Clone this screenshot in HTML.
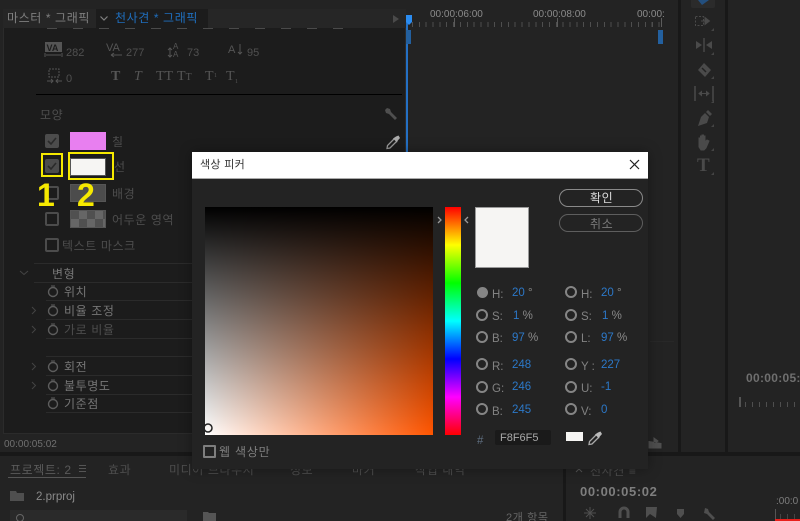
<!DOCTYPE html>
<html lang="ko"><head><meta charset="utf-8">
<style>
html,body{margin:0;padding:0;background:#232323}
#p{position:relative;width:800px;height:521px;overflow:hidden;background:#232323;font-family:"Liberation Sans","Noto Sans CJK KR",sans-serif;font-size:11px;color:#777}
#p div,#p span,#p svg{position:absolute}
.t{white-space:nowrap;line-height:14px;letter-spacing:.6px;font-size:12px;margin-top:1px}
.d{color:#4d4d4d}.m{color:#767676}.l{color:#8a8a8a}
.tc{color:#8b8b8b;font-size:10px;letter-spacing:0;white-space:nowrap;line-height:12px}
.n{color:#505050;font-size:11px;white-space:nowrap;line-height:12px}
.ck{width:10px;height:10px;border:2px solid #4c4c4c;border-radius:2px}
.on{background:#4c4c4c}
.sep{height:1px;background:#2b2b2b}
.r{width:8px;height:8px;border:2px solid #858585;border-radius:50%}
.lb{color:#828282;font-size:11.5px;line-height:13px;white-space:nowrap;margin-top:1px}
.v{color:#2c78c8;font-size:11.5px;line-height:13px;white-space:nowrap;margin-top:1px}
.v i{font-style:normal;color:#8a8a8a}
.sf{font-family:"Liberation Serif",serif;font-size:14px;line-height:16px;color:#555;white-space:nowrap}
.c{width:0;height:0;border-left:3px solid transparent;border-bottom:3px solid #444}
</style></head><body>
<div id="p">
<!-- left panel -->
<div style="left:3px;top:9px;width:403px;height:425px;background:#1c1c1c;border:1px solid #2b2b2b;box-sizing:border-box"></div>
<div style="left:3px;top:9px;width:403px;height:19px;background:#262626"></div>
<div style="left:96px;top:9px;width:112px;height:19px;background:#1c1c1c"></div>
<span class="t" style="left:7px;top:10px;color:#7f7f7f">마스터 * 그래픽</span>
<svg style="left:99px;top:15px" width="10" height="7"><path d="M1.500 1.500L5 5L8.500 1.500" fill="none" stroke="#808080" stroke-width="1.200"/></svg>
<span class="t" style="left:115px;top:10px;color:#1f6fbf">천사견 * 그래픽</span>
<svg style="left:392px;top:14px" width="8" height="10"><path d="M1 1L7 5L1 9Z" fill="#4a4a4a"/></svg>
<div style="left:47px;top:28px;width:310px;height:1px;background:repeating-linear-gradient(90deg,#4a4a4a 0 10px,transparent 10px 26px)"></div>
<!-- text attributes -->
<svg style="left:44px;top:41px" width="19" height="17"><rect x="1" y="1" width="17" height="10" fill="#555"/><text x="2.500" y="10" font-size="9" font-weight="bold" fill="#1c1c1c" font-family="Liberation Sans">VA</text><path d="M1 12v4M18 12v4M2 14h15" stroke="#555"/></svg>
<span class="n" style="left:66px;top:47px">282</span>
<svg style="left:106px;top:41px" width="17" height="17"><text x="0" y="10" font-size="11" fill="#555" font-family="Liberation Sans">VA</text><path d="M5 14h11M5 14l3-2M5 14l3 2" stroke="#555" fill="none"/></svg>
<span class="n" style="left:126px;top:47px">277</span>
<svg style="left:167px;top:40px" width="16" height="18"><text x="6" y="9" font-size="8" fill="#555" font-family="Liberation Sans">A</text><text x="6" y="17" font-size="8" fill="#555" font-family="Liberation Sans">A</text><path d="M3 8v9M1 10l2-2l2 2M1 15l2 2l2-2" stroke="#555" fill="none"/></svg>
<span class="n" style="left:187px;top:47px">73</span>
<svg style="left:227px;top:41px" width="16" height="16"><text x="1" y="12" font-size="11" fill="#555" font-family="Liberation Sans">A</text><path d="M13 3v10M11 11l2 2l2-2" stroke="#555" fill="none"/></svg>
<span class="n" style="left:247px;top:47px">95</span>
<svg style="left:46px;top:68px" width="17" height="16"><rect x="3" y="1" width="10" height="8" fill="none" stroke="#555" stroke-dasharray="2 1"/><path d="M1 13h6M5 11l2 2l-2 2M16 13h-6M12 11l-2 2l2 2" stroke="#555" fill="none"/></svg>
<span class="n" style="left:66px;top:73px">0</span>
<div class="sf" style="left:111px;top:69px;font-weight:bold">T</div>
<div class="sf" style="left:134px;top:69px;font-style:italic">T</div>
<div class="sf" style="left:156px;top:69px">TT</div>
<div class="sf" style="left:177px;top:69px">T<span style="position:static;font-size:10px">T</span></div>
<div class="sf" style="left:205px;top:69px">T<span style="left:9px;top:-1px;font-size:6px">1</span></div>
<div class="sf" style="left:226px;top:69px">T<span style="left:9px;top:5px;font-size:6px">1</span></div>
<div style="left:36px;top:94px;width:366px;height:1px;background:#000"></div>
<span class="t d" style="left:40px;top:107px">모양</span>
<svg style="left:383px;top:107px" width="15" height="15"><path d="M2 3l2-2l3 1l1 3l6 6l-2 2l-6-6l-3-1z" fill="#4f4f4f"/></svg>
<svg style="left:385px;top:134px" width="16" height="16"><path d="M9 5L2.500 11.500L2 14.500L5 14L11.500 7.500" fill="none" stroke="#999" stroke-width="1.300"/><path d="M8 4.500L12 8.500L12.800 6.500L15 4L13.500 1.500L11 2.500Z" fill="#aaa"/></svg>
<!-- appearance rows -->
<div class="ck on" style="left:45px;top:134px"></div>
<svg style="left:47px;top:136px" width="10" height="10"><path d="M1 5l3 3l5-6" fill="none" stroke="#2a2a2a" stroke-width="1.600"/></svg>
<div style="left:70px;top:132px;width:36px;height:18px;background:#e87ff0"></div>
<span class="t d" style="left:112px;top:134px">칠</span>
<div class="ck on" style="left:45px;top:159px"></div>
<svg style="left:47px;top:161px" width="10" height="10"><path d="M1 5l3 3l5-6" fill="none" stroke="#2a2a2a" stroke-width="1.600"/></svg>
<div style="left:70px;top:158px;width:36px;height:18px;background:#f6f5f3;box-sizing:border-box;border:1px solid #555"></div>
<span class="t d" style="left:114px;top:159px">선</span>
<div class="ck" style="left:45px;top:186px"></div>
<div style="left:70px;top:184px;width:36px;height:18px;background:#4c4c4c;box-sizing:border-box;border:1px solid #555"></div>
<span class="t d" style="left:112px;top:186px">배경</span>
<div class="ck" style="left:45px;top:212px"></div>
<div style="left:70px;top:210px;width:36px;height:18px;box-sizing:border-box;border:1px solid #555;background:repeating-conic-gradient(#666 0 25%,#505050 0 50%) 0 0/16px 16px"></div>
<span class="t d" style="left:112px;top:212px">어두운 영역</span>
<div class="ck" style="left:45px;top:238px"></div>
<span class="t d" style="left:62px;top:238px">텍스트 마스크</span>
<div class="sep" style="left:34px;top:263px;width:370px"></div>
<svg style="left:19px;top:270px" width="10" height="6"><path d="M1 1l4 3.500L9 1" fill="none" stroke="#444"/></svg>
<span class="t m" style="left:52px;top:266px">변형</span>
<!-- transform rows -->
<div class="sep" style="left:34px;top:282px;width:370px"></div>
<div class="sep" style="left:46px;top:300px;width:358px"></div>
<div class="sep" style="left:46px;top:319px;width:358px"></div>
<div class="sep" style="left:46px;top:338px;width:358px"></div>
<div class="sep" style="left:46px;top:356px;width:358px"></div>
<div class="sep" style="left:46px;top:375px;width:358px"></div>
<div class="sep" style="left:46px;top:394px;width:358px"></div>
<div class="sep" style="left:46px;top:412px;width:358px"></div>
<svg style="left:47px;top:285px" width="12" height="13"><circle cx="6" cy="7" r="4.500" fill="none" stroke="#5d5d5d" stroke-width="1.400"/><path d="M4 1h4" stroke="#5d5d5d"/></svg>
<span class="t m" style="left:64px;top:284px">위치</span>
<svg style="left:31px;top:306px" width="6" height="9"><path d="M1 1l3.500 3.500L1 8" fill="none" stroke="#444"/></svg>
<svg style="left:47px;top:304px" width="12" height="13"><circle cx="6" cy="7" r="4.500" fill="none" stroke="#5d5d5d" stroke-width="1.400"/><path d="M4 1h4" stroke="#5d5d5d"/></svg>
<span class="t m" style="left:64px;top:303px">비율 조정</span>
<svg style="left:31px;top:325px" width="6" height="9"><path d="M1 1l3.500 3.500L1 8" fill="none" stroke="#444"/></svg>
<svg style="left:47px;top:323px" width="12" height="13"><circle cx="6" cy="7" r="4.500" fill="none" stroke="#5d5d5d" stroke-width="1.400"/><path d="M4 1h4" stroke="#5d5d5d"/></svg>
<span class="t d" style="left:64px;top:322px">가로 비율</span>
<svg style="left:31px;top:362px" width="6" height="9"><path d="M1 1l3.500 3.500L1 8" fill="none" stroke="#444"/></svg>
<svg style="left:47px;top:360px" width="12" height="13"><circle cx="6" cy="7" r="4.500" fill="none" stroke="#5d5d5d" stroke-width="1.400"/><path d="M4 1h4" stroke="#5d5d5d"/></svg>
<span class="t m" style="left:64px;top:359px">회전</span>
<svg style="left:31px;top:381px" width="6" height="9"><path d="M1 1l3.500 3.500L1 8" fill="none" stroke="#444"/></svg>
<svg style="left:47px;top:379px" width="12" height="13"><circle cx="6" cy="7" r="4.500" fill="none" stroke="#5d5d5d" stroke-width="1.400"/><path d="M4 1h4" stroke="#5d5d5d"/></svg>
<span class="t m" style="left:64px;top:378px">불투명도</span>
<svg style="left:47px;top:397px" width="12" height="13"><circle cx="6" cy="7" r="4.500" fill="none" stroke="#5d5d5d" stroke-width="1.400"/><path d="M4 1h4" stroke="#5d5d5d"/></svg>
<span class="t m" style="left:64px;top:396px">기준점</span>
<div style="left:3px;top:434px;width:190px;height:18px;background:#232323"></div>
<span class="tc" style="left:4px;top:439px;color:#707070">00:00:05:02</span>
<!-- annotations -->
<div style="left:41px;top:153px;width:22px;height:24px;box-sizing:border-box;border:2px solid #f6e900"></div>
<div style="left:68px;top:152px;width:46px;height:28px;box-sizing:border-box;border:2px solid #f6e900"></div>
<div style="left:37px;top:177px;font:bold 32px/36px 'Liberation Sans';color:#f6e900">1</div>
<div style="left:77px;top:177px;font:bold 32px/36px 'Liberation Sans';color:#f6e900">2</div>
<!-- timeline -->
<div class="tc" style="left:430px;top:9px">00:00:06:00</div>
<div class="tc" style="left:533px;top:9px">00:00:08:00</div>
<div class="tc" style="left:637px;top:9px;width:27px;overflow:hidden">00:00:06</div>
<div style="left:412px;top:22px;width:248px;height:5px;background:repeating-linear-gradient(90deg,#4e4e4e 0 1px,transparent 1px 6.850px)"></div>
<div style="left:454px;top:18px;width:1px;height:9px;background:#5c5c5c"></div>
<div style="left:557px;top:18px;width:1px;height:9px;background:#5c5c5c"></div>
<div style="left:661px;top:18px;width:1px;height:9px;background:#5c5c5c"></div>
<div style="left:406px;top:15px;width:2px;height:419px;background:#2470c4"></div>
<svg style="left:405px;top:14px" width="8" height="12"><path d="M1 1h6v7l-3 3l-3-3z" fill="#2b8cf0"/></svg>
<div style="left:406px;top:30px;width:5px;height:14px;background:#23609f"></div>
<div style="left:658px;top:30px;width:5px;height:14px;background:#23609f"></div>
<!-- tool panel -->
<div style="left:678px;top:0;width:3px;height:452px;background:#181818"></div>
<div style="left:725px;top:0;width:3px;height:452px;background:#181818"></div>
<div style="left:691px;top:0;width:24px;height:8px;background:#2b2b2b;border-radius:0 0 2px 2px"></div>
<svg style="left:698px;top:0" width="12" height="6"><path d="M0 0h11L4 5z" fill="#234f7e"/></svg>
<svg style="left:694px;top:14px" width="20" height="14"><rect x="1.500" y="2.500" width="8" height="9" fill="none" stroke="#4a4a4a" stroke-dasharray="2 1.500"/><path d="M7 7h7M11 3.500L15.500 7L11 10.500z" fill="#4a4a4a" stroke="#4a4a4a"/></svg>
<svg style="left:694px;top:37px" width="20" height="16"><path d="M10 1v14" stroke="#4a4a4a" stroke-width="1.400"/><path d="M8 8L2 4v8zM12 8l6-4v8z" fill="#4a4a4a"/></svg>
<svg style="left:695px;top:61px" width="18" height="18"><path d="M9 2l7 7l-6 7l-7-7z" fill="#4a4a4a"/><path d="M7 7l4 4" stroke="#232323" stroke-width="1.500"/></svg>
<svg style="left:693px;top:85px" width="22" height="17"><path d="M2 1v15M20 1v15" stroke="#4a4a4a" stroke-width="1.500"/><path d="M6 8.500h10M6 8.500l2.500-2v4zM16 8.500l-2.500-2v4z" stroke="#4a4a4a" fill="#4a4a4a"/></svg>
<svg style="left:695px;top:109px" width="18" height="18"><path d="M13 1l4 4l-2 2l-4-4zM10 4l4 4l-2 6l-9 3l3-9z" fill="#4a4a4a"/></svg>
<svg style="left:695px;top:133px" width="18" height="18"><path d="M4 9V5h1.500v3V3h1.500v5V2h1.500v6V3H10v6l2-2l2 1l-3 7l-2 2H6l-2-3z" fill="#4a4a4a" stroke="#4a4a4a"/></svg>
<div style="left:697px;top:155px;font:bold 19px/22px 'Liberation Serif';color:#4a4a4a">T</div>
<div class="c" style="left:711px;top:28px"></div><div class="c" style="left:711px;top:52px"></div><div class="c" style="left:711px;top:76px"></div><div class="c" style="left:711px;top:100px"></div><div class="c" style="left:711px;top:124px"></div><div class="c" style="left:711px;top:148px"></div><div class="c" style="left:711px;top:172px"></div>
<!-- monitor -->
<div style="left:746px;top:371px;font:bold 12px/14px 'Liberation Sans';color:#6f6f6f;letter-spacing:.3px;white-space:nowrap">00:00:05:</div>
<div style="left:739px;top:397px;width:2px;height:10px;background:#555"></div>
<div style="left:745px;top:402px;width:55px;height:5px;background:repeating-linear-gradient(90deg,#4e4e4e 0 1px,transparent 1px 7px)"></div>
<div style="left:650px;top:341px;width:24px;height:1px;background:#282828"></div>
<svg style="left:648px;top:437px" width="14" height="12"><path d="M1 4v7h12V6M6 1l4 3l-4 3z" stroke="#4f4f4f" fill="#4f4f4f"/></svg>
<!-- bottom bars -->
<div style="left:0;top:452px;width:800px;height:4px;background:#181818"></div>
<div style="left:563px;top:456px;width:3px;height:65px;background:#181818"></div>
<!-- project panel -->
<span class="t" style="left:10px;top:462px;color:#5a5a5a">프로젝트: 2</span>
<div style="left:79px;top:465px;width:7px;height:7px;background:repeating-linear-gradient(#555 0 1px,transparent 1px 3px)"></div>
<div style="left:8px;top:477px;width:78px;height:1px;background:#555"></div>
<span class="t d" style="left:108px;top:462px">효과</span>
<span class="t d" style="left:169px;top:462px">미디어 브라우저</span>
<span class="t d" style="left:290px;top:462px">정보</span>
<span class="t d" style="left:352px;top:462px">마커</span>
<span class="t d" style="left:415px;top:462px">작업 내역</span>
<svg style="left:10px;top:490px" width="15" height="12"><path d="M0 1h6l1 2h7v8H0z" fill="#4f4f4f"/></svg>
<span class="t" style="left:36px;top:489px;color:#8a8a8a;letter-spacing:0;font-size:11.500px">2.prproj</span>
<div style="left:10px;top:510px;width:177px;height:11px;background:#2a2a2a"></div>
<svg style="left:15px;top:513px" width="10" height="8"><circle cx="5" cy="5" r="3.500" fill="none" stroke="#666"/></svg>
<svg style="left:203px;top:512px" width="14" height="9"><path d="M0 0h5l1 1h7v8H0z" fill="#555"/></svg>
<span class="t" style="left:506px;top:510px;color:#666;font-size:11px">2개 항목</span>
<!-- sequence panel -->
<svg style="left:575px;top:468px" width="8" height="5"><path d="M1 4l3-3l3 3" stroke="#555" fill="none"/></svg>
<span class="t d" style="left:590px;top:463px">천사견 ≡</span>
<div style="left:580px;top:485px;font:bold 13px/14px 'Liberation Sans';color:#7e7e7e;letter-spacing:.6px;white-space:nowrap">00:00:05:02</div>
<svg style="left:583px;top:506px" width="140" height="15"><g fill="none" stroke="#4f4f4f"><path d="M7 1v12M1 7h12M3 3l8 8M11 3l-8 8"/><path d="M37 12V6a4 4 0 0 1 8 0v6" stroke-width="3"/></g><path d="M63 1h11l-1 11l-6-4l-4 4z" fill="#4f4f4f"/><path d="M94 3h7v5l-3.500 4l-3.500-4z" fill="#4f4f4f"/><path d="M122 2l3 1l1 3l6 6l-2 2l-6-6l-3-1z" fill="#4f4f4f"/></svg>
<div style="left:776px;top:496px;font:10px/12px 'Liberation Sans';color:#7e7e7e;white-space:nowrap">:00:0</div>
<div style="left:775px;top:509px;width:1px;height:10px;background:#555"></div>
<div style="left:780px;top:514px;width:20px;height:5px;background:repeating-linear-gradient(90deg,#444 0 1px,transparent 1px 7px)"></div>
<div style="left:775px;top:519px;width:25px;height:2px;background:#e8201c"></div>
<!-- dialog -->
<div style="left:192px;top:152px;width:456px;height:317px;background:#232323;box-shadow:0 0 12px rgba(0,0,0,.35)"></div>
<div style="left:192px;top:152px;width:456px;height:27px;background:#fff;border-bottom:1px solid #aaa;box-sizing:border-box"></div>
<span class="t" style="left:200px;top:157px;font-size:11px;color:#333;letter-spacing:.3px">색상 피커</span>
<svg style="left:628px;top:158px" width="13" height="13"><path d="M2 2l9 9M11 2l-9 9" stroke="#222" stroke-width="1.200"/></svg>
<!-- colour field -->
<div style="left:205px;top:207px;width:228px;height:228px;background:linear-gradient(to top,rgba(0,0,0,0),#000),linear-gradient(to right,#fff,#ff5500)"></div>
<svg style="left:202px;top:421px" width="14" height="14"><circle cx="6" cy="7" r="4" fill="none" stroke="#222" stroke-width="1.500"/></svg>
<!-- hue bar -->
<div style="left:445px;top:207px;width:16px;height:228px;background:linear-gradient(to bottom,#f00 0%,#ff0 16.670%,#0f0 33.330%,#0ff 50%,#00f 66.670%,#f0f 83.330%,#f00 100%)"></div>
<svg style="left:437px;top:216px" width="6" height="8"><path d="M1 1l3 3l-3 3" fill="none" stroke="#9a9a9a" stroke-width="1.300"/></svg>
<svg style="left:463px;top:216px" width="6" height="8"><path d="M5 1L2 4l3 3" fill="none" stroke="#9a9a9a" stroke-width="1.300"/></svg>
<!-- swatch -->
<div style="left:475px;top:207px;width:54px;height:61px;background:#f6f5f3;border:1px solid #999;box-sizing:border-box"></div>
<!-- buttons -->
<div style="left:559px;top:189px;width:84px;height:18px;box-sizing:border-box;border:1.500px solid #8a8a8a;border-radius:9px"></div>
<span class="t" style="left:590px;top:190px;color:#ddd">확인</span>
<div style="left:559px;top:214px;width:84px;height:18px;box-sizing:border-box;border:1px solid #5e5e5e;border-radius:9px"></div>
<span class="t" style="left:590px;top:216px;color:#7a7a7a">취소</span>
<!-- values left -->
<div style="left:477px;top:287px;width:11px;height:11px;border-radius:50%;background:#858585"></div>
<span class="lb" style="left:492px;top:288px">H:</span><span class="v" style="left:512px;top:286px">20 <i>°</i></span>
<div class="r" style="left:476px;top:309px"></div>
<span class="lb" style="left:492px;top:310px">S:</span><span class="v" style="left:513px;top:309px">1 <i>%</i></span>
<div class="r" style="left:476px;top:331px"></div>
<span class="lb" style="left:492px;top:332px">B:</span><span class="v" style="left:512px;top:331px">97 <i>%</i></span>
<div class="r" style="left:476px;top:358px"></div>
<span class="lb" style="left:492px;top:360px">R:</span><span class="v" style="left:512px;top:358px">248</span>
<div class="r" style="left:476px;top:381px"></div>
<span class="lb" style="left:492px;top:382px">G:</span><span class="v" style="left:512px;top:380px">246</span>
<div class="r" style="left:476px;top:403px"></div>
<span class="lb" style="left:492px;top:405px">B:</span><span class="v" style="left:512px;top:403px">245</span>
<!-- values right -->
<div class="r" style="left:565px;top:286px"></div>
<span class="lb" style="left:581px;top:288px">H:</span><span class="v" style="left:601px;top:286px">20 <i>°</i></span>
<div class="r" style="left:565px;top:309px"></div>
<span class="lb" style="left:581px;top:310px">S:</span><span class="v" style="left:602px;top:309px">1 <i>%</i></span>
<div class="r" style="left:565px;top:331px"></div>
<span class="lb" style="left:581px;top:332px">L:</span><span class="v" style="left:601px;top:331px">97 <i>%</i></span>
<div class="r" style="left:565px;top:358px"></div>
<span class="lb" style="left:581px;top:360px">Y :</span><span class="v" style="left:601px;top:358px">227</span>
<div class="r" style="left:565px;top:381px"></div>
<span class="lb" style="left:581px;top:382px">U:</span><span class="v" style="left:601px;top:380px">-1</span>
<div class="r" style="left:565px;top:403px"></div>
<span class="lb" style="left:581px;top:405px">V:</span><span class="v" style="left:601px;top:403px">0</span>
<!-- hex -->
<span class="lb" style="left:477px;top:434px;color:#5f6f80">#</span>
<div style="left:495px;top:430px;width:56px;height:15px;background:#1a1a1a;border-radius:2px"></div>
<span class="lb" style="left:500px;top:431px;color:#a8a8a8;font-size:11px">F8F6F5</span>
<div style="left:566px;top:432px;width:17px;height:9px;background:#f6f5f3"></div>
<svg style="left:587px;top:430px" width="16" height="16"><path d="M9 5L2.500 11.500L2 14.500L5 14L11.500 7.500" fill="none" stroke="#aaa" stroke-width="1.300"/><path d="M8 4.500L12 8.500L12.800 6.500L15 4L13.500 1.500L11 2.500Z" fill="#bbb"/></svg>
<!-- web only -->
<div style="left:203px;top:445px;width:9px;height:9px;border:2px solid #7e7e7e;border-radius:1px"></div>
<span class="t" style="left:219px;top:444px;color:#7e7e7e;letter-spacing:.8px">웹 색상만</span>
</div>
</body></html>
